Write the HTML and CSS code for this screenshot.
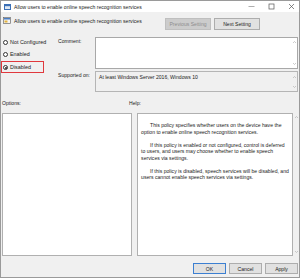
FILE: index.html
```html
<!DOCTYPE html>
<html>
<head>
  <title>Allow users to enable online speech recognition services</title>
  <link rel="stylesheet" href="styles.css">
</head>
<body>
  <div class="window">
    <div class="titlebar">
      <svg class="app-icon" width="7" height="6" viewBox="0 0 7 6"><rect x="0.5" y="0.5" width="6" height="5" fill="#dfe9f5" stroke="#3b6fb6"/><rect x="1" y="1" width="5" height="1.2" fill="#3b6fb6"/></svg>
      <span class="title">Allow users to enable online speech recognition services</span>
      <div class="controls">
        <svg width="7" height="7" viewBox="0 0 7 7"><path d="M0.5 3.5h6" stroke="#777" stroke-width="0.6"/></svg>
        <svg width="7" height="7" viewBox="0 0 7 7"><rect x="1" y="1" width="5" height="5" fill="none" stroke="#555" stroke-width="0.7"/></svg>
        <svg width="7" height="7" viewBox="0 0 7 7"><path d="M1 1l5 5M6 1l-5 5" stroke="#555" stroke-width="0.7"/></svg>
      </div>
    </div>

    <div class="header">
      <div class="policy-name">
        <svg width="8" height="7" viewBox="0 0 8 7"><rect x="0.5" y="0.5" width="7" height="6" fill="#f4f4f4" stroke="#6a6a6a" stroke-width="0.7"/><rect x="1" y="1" width="6" height="1.5" fill="#4b7fc4"/><rect x="1.5" y="3.5" width="3" height="2" fill="#e3b23c"/></svg>
        <span>Allow users to enable online speech recognition services</span>
      </div>
      <div class="nav-buttons">
        <button class="btn btn-disabled">Previous Setting</button>
        <button class="btn">Next Setting</button>
      </div>
    </div>

    <div class="main">
      <div class="choices">
        <label class="radio"><span class="dot"></span>Not Configured</label>
        <label class="radio"><span class="dot"></span>Enabled</label>
        <label class="radio radio-checked"><span class="dot"></span>Disabled</label>
      </div>
      <div class="fields">
        <div class="field-label">Comment:</div>
        <div class="box comment">
          <div class="scroll">
            <svg width="5" height="4" viewBox="0 0 5 4"><path d="M1 3l1.5-1.5L4 3" fill="none" stroke="#aaa" stroke-width="0.6"/></svg>
            <svg width="5" height="4" viewBox="0 0 5 4"><path d="M1 1l1.5 1.5L4 1" fill="none" stroke="#aaa" stroke-width="0.6"/></svg>
          </div>
        </div>
        <div class="field-label label-supported">Supported on:</div>
        <div class="box supported">
          <span>At least Windows Server 2016, Windows 10</span>
          <div class="scroll">
            <svg width="5" height="4" viewBox="0 0 5 4"><path d="M1 3l1.5-1.5L4 3" fill="none" stroke="#aaa" stroke-width="0.6"/></svg>
            <svg width="5" height="4" viewBox="0 0 5 4"><path d="M1 1l1.5 1.5L4 1" fill="none" stroke="#aaa" stroke-width="0.6"/></svg>
          </div>
        </div>
      </div>
    </div>

    <div class="section-labels">
      <span class="label-options">Options:</span>
      <span class="label-help">Help:</span>
    </div>

    <div class="panes">
      <div class="pane options"></div>
      <div class="pane help">
        <p>This policy specifies whether users on the device have the option to enable online speech recognition services.</p>
        <p>If this policy is enabled or not configured, control is deferred to users, and users may choose whether to enable speech services via settings.</p>
        <p>If this policy is disabled, speech services will be disabled, and users cannot enable speech services via settings.</p>
      </div>
      <div class="help-scroll">
        <svg width="5" height="4" viewBox="0 0 5 4"><path d="M1 3l1.5-1.5L4 3" fill="none" stroke="#aaa" stroke-width="0.6"/></svg>
        <svg width="5" height="4" viewBox="0 0 5 4"><path d="M1 1l1.5 1.5L4 1" fill="none" stroke="#aaa" stroke-width="0.6"/></svg>
      </div>
    </div>

    <div class="footer">
      <button class="btn btn-default">OK</button>
      <button class="btn">Cancel</button>
      <button class="btn">Apply</button>
    </div>
  </div>
</body>
</html>
```

FILE: styles.css
```css
body {
  margin: 0;
  font-family: "Liberation Sans", Arial, sans-serif;
  font-size: 5.1px;
  color: #1a1a1a;
}

.window {
  width: 300px;
  height: 278px;
  box-sizing: border-box;
  border: 1px solid #9a9a9a;
  background: #f0f0f0;
  display: flex;
  flex-direction: column;
}

.titlebar {
  height: 11px;
  background: #fff;
  display: flex;
  align-items: center;
  padding-left: 3px;
  gap: 3px;
}

.title {
  font-size: 5.1px;
}

.controls {
  margin-left: auto;
  display: flex;
  gap: 13px;
  padding-right: 4px;
}

.controls svg {
  display: block;
}

.header {
  height: 24px;
  display: flex;
  justify-content: space-between;
  align-items: flex-start;
}

.policy-name {
  display: flex;
  align-items: center;
  gap: 3px;
  padding-left: 2px;
  margin-top: 5px;
  font-size: 5.1px;
}

.policy-name svg {
  display: block;
}

.nav-buttons {
  display: flex;
  gap: 3px;
  margin-top: 6px;
  margin-right: 39px;
}

.btn {
  font-family: "Liberation Sans", Arial, sans-serif;
  font-size: 5.1px;
  color: #222;
  background: #e1e1e1;
  border: 1px solid #adadad;
  height: 12px;
  padding: 0;
  margin: 0;
}

.nav-buttons .btn {
  width: 46px;
}

.btn-disabled {
  background: #cccccc;
  border-color: #bfbfbf;
  color: #8d8d8d;
}

.main {
  display: flex;
  height: 56px;
}

.choices {
  width: 57px;
  display: flex;
  flex-direction: column;
}

.radio {
  display: flex;
  align-items: center;
  gap: 2px;
  height: 12px;
  padding-left: 2px;
  box-sizing: border-box;
  white-space: nowrap;
  font-size: 5.4px;
}

.dot {
  flex: none;
  width: 5px;
  height: 5px;
  border: 0.7px solid #333;
  border-radius: 50%;
  background: #fff;
  box-sizing: border-box;
  position: relative;
}

.radio-checked {
  width: 43px;
  border: 1px solid #e0393e;
  margin-top: 1px;
  padding-left: 1px;
}

.radio-checked .dot::after {
  content: "";
  position: absolute;
  left: 1px;
  top: 1px;
  width: 2px;
  height: 2px;
  border-radius: 50%;
  background: #222;
}

.fields {
  flex: 1;
  display: grid;
  grid-template-columns: 37px 1fr;
  grid-template-rows: 32px 21px;
  row-gap: 2px;
  margin-top: 1px;
  margin-right: 1px;
}

.field-label {
  padding-top: 1px;
}

.box {
  border: 1px solid #a8a8a8;
  background: #fff;
  display: flex;
}

.supported {
  background: #f0f0f0;
  border-color: #b5b5b5;
  padding-left: 3px;
  padding-top: 2px;
}

.scroll {
  margin-left: auto;
  width: 6px;
  display: flex;
  flex-direction: column;
  justify-content: space-between;
  align-items: center;
  padding: 2px 0;
}

.supported .scroll {
  padding-top: 1px;
}

.scroll svg,
.help-scroll svg {
  display: block;
}

.section-labels {
  height: 21px;
  display: flex;
  align-items: center;
  padding-left: 1px;
}

.label-help {
  margin-left: 108px;
}

.panes {
  display: flex;
  height: 143px;
  padding-left: 1px;
}

.pane {
  border: 1px solid #b0b0b0;
  background: #fff;
  box-sizing: border-box;
}

.options {
  width: 131px;
}

.help {
  width: 157px;
  margin-left: 5px;
  padding: 8px 3px 0 3px;
  line-height: 6.5px;
}

.help p {
  margin: 0 0 6.5px 0;
  text-indent: 9px;
}

.help-scroll {
  width: 6px;
  display: flex;
  flex-direction: column;
  justify-content: space-between;
  align-items: center;
  padding: 2px 0;
}

.footer {
  display: flex;
  justify-content: flex-end;
  gap: 3px;
  padding-top: 7px;
  padding-right: 1px;
}

.footer .btn {
  width: 33px;
  height: 11px;
}

.btn-default {
  border-color: #3c7fd1;
}
```
